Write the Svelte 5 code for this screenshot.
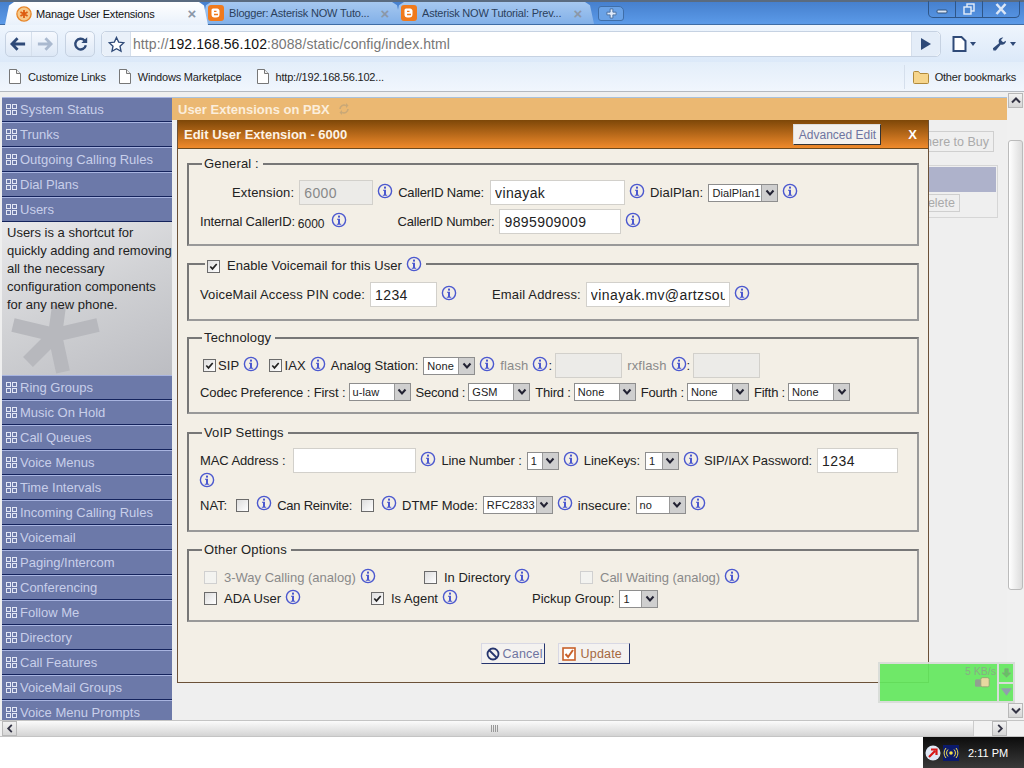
<script>
    const topItems = ['System Status', 'Trunks', 'Outgoing Calling Rules', 'Dial Plans', 'Users'];
    const lowerItems = ['Ring Groups', 'Music On Hold', 'Call Queues', 'Voice Menus', 'Time Intervals', 'Incoming Calling Rules', 'Voicemail', 'Paging/Intercom', 'Conferencing', 'Follow Me', 'Directory', 'Call Features', 'VoiceMail Groups', 'Voice Menu Prompts'];
</script>

{#snippet info()}
    <svg class="info" viewBox="0 0 16 16"><circle cx="8" cy="8" r="6.6" fill="none" stroke="#4b58cf" stroke-width="1.4"/><rect x="7" y="3.6" width="2" height="2" fill="#4b58cf"/><path d="M6 6.8h3v5h1.2v1H5.8v-1H7v-4H6z" fill="#4b58cf"/></svg>
{/snippet}

{#snippet check(on, off)}
    <span class="cb" class:off>
        {#if on}<svg viewBox="0 0 12 12"><path d="M2.5 6l2.4 2.6 4.6-5.4" fill="none" stroke="#222" stroke-width="1.8"/></svg>{/if}
    </span>
{/snippet}

{#snippet sel(text, width)}
    <span class="sel" style="width:{width}px"><span class="seltext">{text}</span><span class="selbtn"><svg viewBox="0 0 10 8"><path d="M1.5 1.5L5 5.5l3.5-4" fill="none" stroke="#223" stroke-width="2"/></svg></span></span>
{/snippet}

{#snippet pageicon()}
    <svg class="pageicon" viewBox="0 0 12 15"><path d="M.5.5h7l4 4v10H.5z" fill="#fff" stroke="#777"/><path d="M7.5.5v4h4" fill="#eee" stroke="#777"/></svg>
{/snippet}

{#snippet blogger()}
    <svg class="favicon" viewBox="0 0 16 16"><rect width="16" height="16" rx="3" fill="#f07a1c"/><path d="M5 3.5h4a2.5 2.5 0 012.5 3V9a3.4 3.4 0 01-3.4 3.5H6.6A3 3 0 013.5 9.500V5A1.500 1.500 0 015 3.500z" fill="#fff"/><path d="M6 6.300h2.500M6 9.500h4" stroke="#f07a1c" stroke-width="1.300"/></svg>
{/snippet}

<div class="screen">
    <header class="tabstrip">
        <div class="tab active">
            <svg class="favicon" viewBox="0 0 18 18"><circle cx="9" cy="9" r="8" fill="#f7c98a" stroke="#e8872a" stroke-width="1.500"/><path d="M9 4.500v9M5 6.700l8 4.600M13 6.700l-8 4.600" stroke="#dd5d10" stroke-width="2"/></svg>
            <span class="tabtitle">Manage User Extensions</span><span class="tabx">×</span>
        </div>
        <div class="tab">
            {@render blogger()}
            <span class="tabtitle">Blogger: Asterisk NOW Tuto...</span><span class="tabx">×</span>
        </div>
        <div class="tab">
            {@render blogger()}
            <span class="tabtitle">Asterisk NOW Tutorial: Prev...</span><span class="tabx">×</span>
        </div>
        <div class="newtab"><svg viewBox="0 0 12 12"><path d="M4.500 1h3v3.500H11v3H7.500V11h-3V7.500H1v-3h3.500z" fill="#dfeafa" stroke="#4a6f9e"/></svg></div>
        <div class="winctl">
            <span><svg viewBox="0 0 14 12"><rect x="2" y="7" width="10" height="3" rx="1" fill="#dbe7f7" stroke="#33527a"/></svg></span>
            <span><svg viewBox="0 0 14 12"><rect x="5" y="1" width="7" height="7" fill="none" stroke="#e6eefa" stroke-width="1.400"/><rect x="2" y="4" width="7" height="7" fill="#4c87d2" stroke="#e6eefa" stroke-width="1.400"/></svg></span>
            <span class="close"><svg viewBox="0 0 14 12"><path d="M2.500 1l9 10M11.500 1l-9 10" stroke="#dbe7f7" stroke-width="2.600"/></svg></span>
        </div>
    </header>

    <nav class="toolbar">
        <div class="navgroup">
            <span class="navbtn"><svg viewBox="0 0 18 16"><path d="M8 2L2 8l6 6M2.500 8H16" fill="none" stroke="#2f4a78" stroke-width="3"/></svg></span>
            <span class="navbtn"><svg viewBox="0 0 18 16"><path d="M10 2l6 6-6 6M15.500 8H2" fill="none" stroke="#aab9cf" stroke-width="3"/></svg></span>
        </div>
        <div class="navgroup reload"><span class="navbtn"><svg viewBox="0 0 18 18"><path d="M13.500 5A6 6 0 1 0 15 10.500" fill="none" stroke="#2f4a78" stroke-width="2.700"/><path d="M16.500 1.500v6.500H10z" fill="#2f4a78"/></svg></span></div>
        <div class="omnibox">
            <span class="star"><svg viewBox="0 0 18 18"><path d="M9 1.500l2.300 5 5.400.6-4 3.700 1.100 5.400L9 13.500l-4.800 2.700 1.100-5.400-4-3.700 5.400-.6z" fill="#fff" stroke="#2f4a78" stroke-width="1.400"/></svg></span>
            <span class="url"><span class="dim">http://</span>192.168.56.102<span class="dim">:8088/static/config/index.html</span></span>
            <span class="go"><svg viewBox="0 0 10 12"><path d="M0 0l10 6-10 6z" fill="#2f4a78"/></svg></span>
        </div>
        <span class="tool doc"><svg viewBox="0 0 14 16"><path d="M1 1h8l4 4v10H1z" fill="#fff" stroke="#2f4a78" stroke-width="2"/></svg><i class="caret"></i></span>
        <span class="tool"><svg viewBox="0 0 16 16"><path d="M15 4.500a4.300 4.300 0 01-5.600 4L4 15H1.500L1 12.500l6.500-5.300A4.300 4.300 0 0112 1L9.500 3.700 11.800 6z" fill="#2f4a78"/></svg><i class="caret"></i></span>
    </nav>

    <div class="bookmarks">
        <span class="mark">{@render pageicon()}Customize Links</span>
        <span class="mark">{@render pageicon()}Windows Marketplace</span>
        <span class="mark">{@render pageicon()}http://192.168.56.102...</span>
        <span class="mark otherbm"><svg class="folder" viewBox="0 0 16 14"><path d="M.5 2.500q0-1 1-1h4l1.500 2h7.500q1 0 1 1v8q0 1-1 1h-13q-1 0-1-1z" fill="#f6d58c" stroke="#b08a3c"/></svg>Other bookmarks</span>
    </div>

    <div class="viewport">
        <div class="page">
            <aside class="sidebar">
                {#each topItems as item}
                    <div class="navitem"><i class="grid"><b></b><b></b><b></b><b></b></i>{item}</div>
                {/each}
                <div class="desc">
                    <svg class="bigstar" viewBox="0 0 170 153"><path d="M53 113L57 84M53 113L11 103M53 113L96 103M53 113L26 140M53 113L61 150" stroke="#b7b8bd" stroke-width="14"/></svg>
                    <p>Users is a shortcut for quickly adding and removing all the necessary configuration components for any new phone.</p>
                </div>
                {#each lowerItems as item}
                    <div class="navitem"><i class="grid"><b></b><b></b><b></b><b></b></i>{item}</div>
                {/each}
            </aside>
            <main class="main">
                <div class="titlebar">User Extensions on PBX <svg class="sync" viewBox="0 0 12 12"><path d="M2 6a4 4 0 016-3.400M10 6a4 4 0 01-6 3.400" fill="none" stroke="#c9a877" stroke-width="1.600"/><path d="M8 0v5l2.500-2.500zM4 12V7L1.500 9.500z" fill="#c9a877"/></svg></div>
                <div class="behind">
                    <div class="buyrow"><span class="ghost buy">Where to Buy</span></div>
                    <div class="usertable">
                        <div class="tablehead"></div>
                        <span class="ghost del">Delete</span>
                    </div>
                </div>
            </main>
            <div class="vscroll">
                <span class="sbtn"><svg viewBox="0 0 10 8"><path d="M1 6l4-4 4 4" fill="none" stroke="#334" stroke-width="2"/></svg></span>
                <span class="vthumb"></span>
                <span class="sbtn"><svg viewBox="0 0 10 8"><path d="M1 2l4 4 4-4" fill="none" stroke="#334" stroke-width="2"/></svg></span>
            </div>

            <section class="modal">
                <div class="modalhead">
                    <span class="modaltitle">Edit User Extension - 6000</span>
                    <span class="advanced">Advanced Edit</span>
                    <span class="closex">X</span>
                </div>

                <fieldset class="general">
                    <legend>General :</legend>
                    <div class="row r1">
                        <label class="extlabel">Extension:</label>
                        <input class="field ext" disabled value="6000" />
                        {@render info()}
                        <label class="narrow">CallerID Name:</label>
                        <input class="field cname" value="vinayak" />
                        {@render info()}
                        <label>DialPlan:</label>
                        {@render sel('DialPlan1', 70)}
                        {@render info()}
                    </div>
                    <div class="row r2">
                        <label class="internal">Internal CallerID:</label>
                        <span class="plain">6000</span>
                        {@render info()}
                        <label class="cnum narrow">CallerID Number:</label>
                        <input class="field cnumber" value="9895909009" />
                        {@render info()}
                    </div>
                </fieldset>

                <fieldset class="voicemail">
                    <legend class="vmlegend">{@render check(true)}<span>Enable Voicemail for this User</span>{@render info()}</legend>
                    <div class="row">
                        <label>VoiceMail Access PIN code:</label>
                        <input class="field pin" value="1234" />
                        {@render info()}
                        <label class="email">Email Address:</label>
                        <input class="field mail" value="vinayak.mv@artzsource.com" />
                        {@render info()}
                    </div>
                </fieldset>

                <fieldset class="tech">
                    <legend>Technology</legend>
                    <div class="row t1">
                        {@render check(true)}<label class="tight">SIP</label>{@render info()}
                        {@render check(true)}<label class="tight">IAX</label>{@render info()}
                        <label class="analog">Analog Station:</label>
                        {@render sel('None', 52)}
                        {@render info()}
                        <label class="grey">flash</label>{@render info()}<label class="colon">:</label>
                        <input class="field flash" disabled />
                        <label class="grey">rxflash</label>{@render info()}<label class="colon">:</label>
                        <input class="field flash" disabled />
                    </div>
                    <div class="row t2">
                        <label>Codec Preference : First :</label>{@render sel('u-law', 62)}
                        <label>Second :</label>{@render sel('GSM', 62)}
                        <label>Third :</label>{@render sel('None', 62)}
                        <label>Fourth :</label>{@render sel('None', 62)}
                        <label>Fifth :</label>{@render sel('None', 62)}
                    </div>
                </fieldset>

                <fieldset class="voip">
                    <legend>VoIP Settings</legend>
                    <div class="row v1">
                        <label>MAC Address :</label>
                        <input class="field mac" />
                        {@render info()}
                        <label>Line Number :</label>
                        {@render sel('1', 32)}
                        {@render info()}
                        <label>LineKeys:</label>
                        {@render sel('1', 34)}
                        {@render info()}
                        <label>SIP/IAX Password:</label>
                        <input class="field pass" value="1234" />
                    </div>
                    <div class="row v2">{@render info()}</div>
                    <div class="row v3">
                        <label>NAT:</label>{@render check(false)}{@render info()}
                        <label class="reinvite">Can Reinvite:</label>{@render check(false)}{@render info()}
                        <label>DTMF Mode:</label>{@render sel('RFC2833', 70)}{@render info()}
                        <label>insecure:</label>{@render sel('no', 50)}{@render info()}
                    </div>
                </fieldset>

                <fieldset class="other">
                    <legend>Other Options</legend>
                    <div class="optrow first">
                        <div class="opt w220">{@render check(false, true)}<label class="grey">3-Way Calling (analog)</label>{@render info()}</div>
                        <div class="opt w156">{@render check(false)}<label>In Directory</label>{@render info()}</div>
                        <div class="opt">{@render check(false, true)}<label class="grey">Call Waiting (analog)</label>{@render info()}</div>
                    </div>
                    <div class="optrow">
                        <div class="opt w167">{@render check(false)}<label>ADA User</label>{@render info()}</div>
                        <div class="opt w161">{@render check(true)}<label>Is Agent</label>{@render info()}</div>
                        <div class="opt pickup"><label>Pickup Group:</label>{@render sel('1', 39)}</div>
                    </div>
                </fieldset>

                <div class="actions">
                    <button class="btn"><svg viewBox="0 0 14 14"><circle cx="7" cy="7" r="5.500" fill="none" stroke="#26356e" stroke-width="1.800"/><path d="M3 3l8 8" stroke="#26356e" stroke-width="1.800"/></svg>Cancel</button>
                    <button class="btn update"><svg viewBox="0 0 14 14"><rect x="1" y="1" width="12" height="12" fill="#fff" stroke="#c8602a" stroke-width="1.600"/><path d="M3.500 7l2.600 3 4.900-7" fill="none" stroke="#c8602a" stroke-width="2"/></svg>Update</button>
                </div>
            </section>

            <div class="speed">
                <div class="speedmain"><span>5 KB/s</span><svg viewBox="0 0 20 18"><rect x="1" y="4" width="8" height="9" rx="2" fill="#8a9a8a"/><rect x="8" y="2" width="10" height="11" rx="2" fill="#e8d79a" stroke="#8a9a6a"/></svg></div>
                <div class="speedside">
                    <span><svg viewBox="0 0 12 12"><path d="M4 1h4v5h3l-5 5-5-5h3z" fill="#58c255" stroke="#7d9a78"/></svg></span>
                    <span><svg viewBox="0 0 12 8"><path d="M0 0h12L6 8z" fill="#8a98a8"/></svg></span>
                </div>
            </div>
        </div>

        <div class="hscroll">
            <span class="sbtn h"><svg viewBox="0 0 8 10"><path d="M6 1L2 5l4 4" fill="none" stroke="#334" stroke-width="2"/></svg></span>
            <span class="hthumb"><i></i></span>
            <span class="sbtn h"><svg viewBox="0 0 8 10"><path d="M2 1l4 4-4 4" fill="none" stroke="#334" stroke-width="2"/></svg></span>
        </div>
    </div>

    <footer class="bottom">
        <div class="tray">
            <svg class="trayicon" viewBox="0 0 16 16"><circle cx="8" cy="8" r="7.500" fill="#dfe8f5"/><path d="M4 12l6-6M6 4.500h5.500V10" fill="none" stroke="#d81818" stroke-width="2.200"/></svg>
            <svg class="trayicon" viewBox="0 0 16 16"><rect width="16" height="16" fill="#0b1a6b"/><circle cx="8" cy="8" r="1.800" fill="#f4e04a"/><path d="M5 4.500a5 5 0 000 7M11 4.500a5 5 0 010 7M3 3a7.500 7.500 0 000 10M13 3a7.500 7.500 0 010 10" fill="none" stroke="#f4e04a"/></svg>
            <span class="clock">2:11 PM</span>
        </div>
    </footer>
</div>

<style>
    :global(body) {
        margin: 0;
        background: #fff;
    }
    .screen {
        width: 1024px;
        height: 768px;
        overflow: hidden;
        display: flex;
        flex-direction: column;
        font-family: "Liberation Sans", Arial, sans-serif;
    }

    /* browser frame */
    .tabstrip {
        height: 25px;
        box-sizing: border-box;
        flex: none;
        display: flex;
        align-items: flex-end;
        padding-left: 5px;
        background: linear-gradient(#4680ce, #5b9ae8);
        border-top: 2px solid #5a6b80;
        border-bottom: 1px solid #3e6ca5;
        position: relative;
    }
    .tab {
        width: 199px;
        height: 22px;
        margin-right: -6px;
        box-sizing: border-box;
        padding: 0 12px 0 6px;
        display: flex;
        align-items: center;
        gap: 5px;
        font-size: 11px;
        letter-spacing: -.2px;
        color: #2b3f5c;
        background: linear-gradient(#a6c8f0, #82b0e8);
        clip-path: polygon(0 100%, 4px 15%, 9px 0, calc(100% - 9px) 0, calc(100% - 4px) 15%, 100% 100%);
    }
    .tab.active {
        width: 203px;
        z-index: 2;
        color: #111;
        background: linear-gradient(#fff, #e9f1fb);
        margin-bottom: -1px;
        height: 23px;
        padding-left: 11px;
        gap: 4px;
    }
    .tabtitle {
        flex: 1;
        min-width: 0;
        white-space: nowrap;
        overflow: hidden;
    }
    .tabx {
        color: #8b97a8;
        font-size: 15px;
        font-weight: bold;
    }
    .favicon {
        width: 16px;
        height: 16px;
        flex: none;
    }
    .newtab {
        margin-left: 10px;
        width: 26px;
        height: 15px;
        margin-bottom: 3px;
        display: flex;
        align-items: center;
        justify-content: center;
        background: #6aa2e6;
        border: 1px solid #3f6ea8;
        border-radius: 3px 5px 3px 3px;
        box-sizing: border-box;
    }
    .newtab svg {
        width: 11px;
        height: 11px;
    }
    .winctl {
        position: absolute;
        top: -1px;
        right: 4px;
        width: 92px;
        height: 17px;
        box-sizing: border-box;
        border: 1px solid #2f5688;
        border-top: none;
        border-radius: 0 0 5px 5px;
        display: flex;
    }
    .winctl span {
        width: 26px;
        display: flex;
        align-items: center;
        justify-content: center;
        border-right: 1px solid #2f5688;
    }
    .winctl .close {
        flex: 1;
        border-right: none;
    }
    .winctl svg {
        width: 14px;
        height: 12px;
    }
    .toolbar {
        height: 37px;
        flex: none;
        box-sizing: border-box;
        padding: 6px 0 5px 5px;
        display: flex;
        align-items: stretch;
        background: linear-gradient(#eef5fd, #dce9f9);
    }
    .navgroup {
        display: flex;
        width: 53px;
        border: 1px solid #c6d2e2;
        border-radius: 5px;
        box-sizing: border-box;
        background: linear-gradient(#f6f9fe, #dde8f6);
    }
    .navgroup.reload {
        width: 30px;
        margin-left: 7px;
    }
    .navbtn {
        flex: 1;
        display: flex;
        align-items: center;
        justify-content: center;
    }
    .navbtn + .navbtn {
        border-left: 1px solid #d5dfec;
    }
    .navbtn svg {
        width: 17px;
        height: 16px;
    }
    .omnibox {
        margin-left: 6px;
        width: 840px;
        box-sizing: border-box;
        display: flex;
        align-items: center;
        background: #fff;
        border: 1px solid #c6d2e2;
        border-radius: 5px;
    }
    .star {
        width: 28px;
        height: 100%;
        display: flex;
        align-items: center;
        justify-content: center;
        background: #e9f0f9;
        border-right: 1px solid #d5dfec;
        border-radius: 5px 0 0 5px;
    }
    .star svg {
        width: 17px;
        height: 17px;
    }
    .url {
        flex: 1;
        margin-left: 2px;
        font-size: 14px;
        letter-spacing: .08px;
        color: #111;
    }
    .dim {
        color: #777;
    }
    .go {
        width: 28px;
        height: 100%;
        display: flex;
        align-items: center;
        justify-content: center;
        background: #e4edf8;
        border-left: 1px solid #d5dfec;
        border-radius: 0 5px 5px 0;
    }
    .go svg {
        width: 10px;
        height: 12px;
    }
    .tool {
        width: 40px;
        display: flex;
        align-items: center;
        justify-content: center;
        gap: 3px;
    }
    .tool.doc {
        margin-left: 3px;
    }
    .tool svg {
        width: 15px;
        height: 16px;
    }
    .caret {
        border: 3.500px solid transparent;
        border-top: 4px solid #2f4a78;
        border-bottom: none;
    }
    .bookmarks {
        height: 30px;
        flex: none;
        box-sizing: border-box;
        padding-left: 9px;
        display: flex;
        align-items: center;
        font-size: 11px;
        color: #222;
        letter-spacing: -.2px;
        background: linear-gradient(#e3eefa, #f1f6fd);
        border-bottom: 1px solid #b4b9c0;
    }
    .mark {
        display: flex;
        align-items: center;
        gap: 7px;
        margin-right: 13px;
    }
    .mark:nth-child(2) {
        margin-right: 15px;
    }
    .otherbm {
        margin: 0 8px 0 auto;
        height: 24px;
        padding-left: 8px;
        gap: 6px;
        border-left: 1px solid #d5dfec;
    }
    .pageicon {
        width: 12px;
        height: 15px;
    }
    .folder {
        width: 16px;
        height: 14px;
    }

    /* page */
    .viewport {
        flex: none;
        display: flex;
        flex-direction: column;
    }
    .page {
        height: 628px;
        flex: none;
        box-sizing: border-box;
        padding-top: 5px;
        display: flex;
        overflow: hidden;
        position: relative;
        background: #efefef;
    }
    .sidebar {
        width: 170px;
        margin-left: 2px;
        flex: none;
        font-size: 13px;
    }
    .navitem {
        height: 25px;
        box-sizing: border-box;
        padding-left: 4px;
        display: flex;
        align-items: center;
        gap: 3px;
        color: #c8cfea;
        background: #6c79a9;
        border-top: 1px solid #a8b4e0;
        border-bottom: 1px solid #14235c;
        white-space: nowrap;
    }
    .grid {
        width: 11px;
        height: 11px;
        display: grid;
        grid-template-columns: 5px 5px;
        gap: 1px;
    }
    .grid b {
        border: 1px solid #e4e8f6;
        box-sizing: border-box;
    }
    .desc {
        height: 153px;
        position: relative;
        overflow: hidden;
        background: linear-gradient(155deg, #e9e9eb, #d0d1d4 50%, #bcbdc2);
    }
    .desc p {
        position: relative;
        margin: 0;
        padding: 2px 0 0 5px;
        color: #222;
        line-height: 18px;
        font-size: 13px;
    }
    .bigstar {
        position: absolute;
        left: 0;
        top: 0;
        width: 170px;
        height: 153px;
    }
    .main {
        flex: 1;
        min-width: 0;
    }
    .titlebar {
        height: 23px;
        box-sizing: border-box;
        padding-left: 6px;
        display: flex;
        align-items: center;
        gap: 8px;
        font-size: 13px;
        font-weight: bold;
        color: #fbeedc;
        background: #ebb872;
        border-top: 1px solid #a9c2dc;
    }
    .sync {
        width: 12px;
        height: 12px;
    }
    .behind {
        padding: 11px 13px 0 0;
        display: flex;
        flex-direction: column;
        align-items: flex-end;
        font-size: 12.500px;
    }
    .ghost {
        box-sizing: border-box;
        display: flex;
        align-items: center;
        justify-content: flex-end;
        padding-right: 4px;
        color: #aaa;
        border: 1px solid #cfcfcf;
        white-space: nowrap;
    }
    .buy {
        width: 82px;
        height: 21px;
    }
    .usertable {
        width: 90px;
        height: 53px;
        margin: 13px -4px 0 0;
        box-sizing: border-box;
        border: 1px solid #d6d6d6;
        padding: 1px;
    }
    .tablehead {
        height: 25px;
        background: #aeb2cb;
    }
    .del {
        width: 50px;
        height: 18px;
        margin: 2px 0 0 0;
    }
    .vscroll {
        width: 17px;
        flex: none;
        margin-top: -5px;
        display: flex;
        flex-direction: column;
        align-items: center;
        background: #f0f0f0;
    }
    .sbtn {
        width: 15px;
        height: 15px;
        flex: none;
        display: flex;
        align-items: center;
        justify-content: center;
        background: linear-gradient(#f2f2f2, #d6d6d6);
        border: 1px solid #b8b8b8;
        box-sizing: border-box;
    }
    .sbtn svg {
        width: 10px;
        height: 9px;
    }
    .sbtn:first-child {
        margin-top: 1px;
    }
    .vscroll .sbtn:last-child {
        margin-bottom: 2px;
    }
    .vthumb {
        width: 15px;
        height: 450px;
        margin: 32px 0 auto;
        box-sizing: border-box;
        border: 1px solid #bbb;
        border-radius: 3px;
        background: linear-gradient(90deg, #fff, #dcdcdc);
    }
    .hscroll {
        height: 17px;
        flex: none;
        display: flex;
        align-items: center;
        padding: 0 17px 0 2px;
        background: #f2f2f2;
        border-top: 1px solid #c4c4c4;
        border-bottom: 1px solid #c4c4c4;
        box-sizing: border-box;
    }
    .hscroll .sbtn {
        margin: 0;
    }
    .hthumb {
        width: 956px;
        height: 15px;
        margin-right: auto;
        display: flex;
        align-items: center;
        justify-content: center;
        background: linear-gradient(#fbfbfb, #d4d4d4);
        border-right: 1px solid #ccc;
    }
    .hthumb i {
        width: 8px;
        height: 7px;
        background: repeating-linear-gradient(90deg, #999 0 1px, transparent 1px 2px);
    }
    .bottom {
        flex: 1;
        display: flex;
        justify-content: flex-end;
    }
    .tray {
        width: 101px;
        box-sizing: border-box;
        padding-left: 2px;
        display: flex;
        align-items: center;
        gap: 2px;
        color: #fff;
        font-size: 11px;
        background: linear-gradient(#0c0c0c, #3a3a3a);
    }
    .trayicon {
        width: 16px;
        height: 16px;
    }
    .clock {
        margin-left: 7px;
    }

    /* modal */
    .modal {
        position: absolute;
        left: 177px;
        top: 28px;
        width: 752px;
        height: 563px;
        box-sizing: border-box;
        padding: 0 9px;
        background: #f3efe6;
        border: 1px solid #6b5138;
        border-top: none;
        font-size: 13px;
        letter-spacing: .15px;
        color: #222;
    }
    .modalhead {
        margin: 0 -9px;
        height: 29px;
        box-sizing: border-box;
        padding: 0 11px 0 6px;
        display: flex;
        align-items: center;
        background: linear-gradient(#7d4708, #f08a2b);
        border-bottom: 1px solid #6b4a20;
    }
    .modaltitle {
        flex: 1;
        font-size: 13px;
        font-weight: bold;
        letter-spacing: 0;
        color: #fdf3e6;
    }
    .advanced {
        margin-right: 27px;
        padding: 0 4px 0 5px;
        height: 21px;
        line-height: 20px;
        font-size: 12px;
        letter-spacing: 0;
        box-sizing: border-box;
        color: #6e74a0;
        background: #f3f1ee;
        border: 1px solid #ddd;
        border-right-color: #333;
        border-bottom-color: #333;
    }
    .closex {
        color: #fff;
        font-weight: bold;
        font-size: 13px;
    }
    fieldset {
        margin: 0 0 10px;
        padding: 0 0 0 11px;
        box-sizing: border-box;
        border-width: 2px;
        border-style: solid;
        border-color: #777 #999 #999 #777;
        min-width: 0;
    }
    legend {
        margin-left: 2px;
        padding: 0 4px 0 2px;
        line-height: 16px;
    }
    .general {
        height: 90px;
        margin-top: 7px;
        margin-bottom: 8px;
    }
    .voicemail {
        height: 67px;
        margin-bottom: 9px;
    }
    .tech {
        height: 84px;
        margin-bottom: 11px;
    }
    .voip {
        height: 107px;
    }
    .other {
        height: 80px;
        margin-bottom: 0;
    }
    .row {
        display: flex;
        align-items: center;
        gap: 5px;
        white-space: nowrap;
    }
    label.grey {
        color: #8a8a8a;
    }
    .narrow {
        letter-spacing: -.22px;
    }
    .info {
        width: 16px;
        height: 16px;
        margin: -4px 0 0 -1px;
        flex: none;
    }
    .cb {
        width: 13px;
        height: 13px;
        box-sizing: border-box;
        flex: none;
        border: 1px solid #6b6b6b;
        background: linear-gradient(135deg, #ddd, #fff);
    }
    .cb.off {
        border-color: #d0d0d0;
        background: #f3f3f0;
    }
    .cb svg {
        display: block;
    }
    .field {
        height: 25px;
        box-sizing: border-box;
        padding: 0 4px;
        border: 1px solid #d2d0cb;
        background: #fff;
        font: 14px "Liberation Sans", Arial, sans-serif;
        letter-spacing: .4px;
        color: #222;
        outline: none;
    }
    .field:disabled {
        background: #ecebe8;
        color: #888;
    }
    .sel {
        height: 18px;
        box-sizing: border-box;
        flex: none;
        display: flex;
        align-items: center;
        background: #fff;
        border: 1px solid #8e8e8e;
        font-size: 11px;
        letter-spacing: .1px;
        overflow: hidden;
    }
    .seltext {
        flex: 1;
        padding-left: 3px;
    }
    .selbtn {
        width: 15px;
        height: 100%;
        display: flex;
        align-items: center;
        justify-content: center;
        background: #cfcfcf;
        border-left: 1px solid #999;
    }
    .selbtn svg {
        width: 10px;
        height: 8px;
    }

    /* general */
    .r1 {
        margin-top: 8px;
    }
    .extlabel {
        margin-left: 32px;
    }
    .ext {
        width: 74px;
    }
    .cname {
        width: 135px;
        margin-left: 1px;
    }
    .r2 {
        margin-top: 4px;
    }
    .internal {
        letter-spacing: -.15px;
    }
    .plain {
        font-size: 12px;
        letter-spacing: 0;
        margin: 4px 2px 0 -2px;
    }
    .cnum {
        margin-left: 46px;
    }
    .cnumber {
        width: 122px;
    }

    /* voicemail */
    .vmlegend {
        display: flex;
        align-items: center;
        gap: 7px;
        margin-left: 5px;
        padding-top: 4px;
        letter-spacing: .05px;
    }
    .vmlegend .info {
        margin-left: -3px;
    }
    .voicemail .row {
        margin-top: 8px;
    }
    .pin {
        width: 67px;
    }
    .email {
        margin-left: 30px;
    }
    .mail {
        width: 144px;
    }

    /* technology */
    .t1 {
        margin: 7px 0 0 -2px;
    }
    .t1 .cb {
        margin-left: 5px;
    }
    .tight {
        margin-left: -3px;
    }
    .analog {
        letter-spacing: -.05px;
    }
    .colon {
        margin: 0 -2px 0 -5px;
    }
    .flash {
        width: 67px;
    }
    .t2 {
        margin-top: 5px;
        gap: 4px;
    }
    .t2 label {
        margin: 0 -1px 0 1px;
        letter-spacing: -.2px;
    }
    .t2 label:first-child {
        margin-left: 0;
        letter-spacing: -.1px;
    }

    /* voip */
    .v1 {
        margin-top: 7px;
    }
    .v1 label {
        letter-spacing: -.1px;
    }
    .mac {
        width: 123px;
        margin-left: 3px;
    }
    .pass {
        width: 81px;
    }
    .v2 {
        margin-top: 3px;
    }
    .v3 {
        margin-top: 8px;
    }
    .v3 label {
        letter-spacing: 0;
    }
    .v3 .reinvite {
        letter-spacing: -.25px;
    }
    .v3 .cb {
        margin-left: 4px;
    }
    .v3 .cb + .info {
        margin-left: 2px;
    }

    /* other */
    .optrow {
        display: flex;
        margin-left: 4px;
    }
    .optrow.first {
        margin-top: 9px;
    }
    .opt {
        display: flex;
        align-items: center;
        gap: 7px;
        height: 21px;
        white-space: nowrap;
    }
    .opt label {
        letter-spacing: 0;
    }
    .opt .info {
        margin-left: -3px;
    }
    .w220 {
        width: 220px;
    }
    .w156 {
        width: 156px;
    }
    .w167 {
        width: 167px;
    }
    .w161 {
        width: 161px;
    }
    .pickup {
        gap: 5px;
    }
    .actions {
        margin-top: 21px;
        display: flex;
        justify-content: center;
        gap: 13px;
        padding-left: 4px;
    }
    .btn {
        width: 64px;
        height: 21px;
        box-sizing: border-box;
        padding: 0 0 0 4px;
        display: flex;
        align-items: center;
        gap: 3px;
        font: 12.500px "Liberation Sans", Arial, sans-serif;
        letter-spacing: .2px;
        color: #6e74a0;
        background: #f4f2f0;
        border: 1px solid #d8d8e4;
        border-right-color: #26356e;
        border-bottom-color: #26356e;
    }
    .btn svg {
        width: 14px;
        height: 14px;
    }
    .btn.update {
        width: 72px;
        color: #a4683f;
        padding-left: 3px;
        gap: 5px;
        border-color: #d8d8e4 #26356e #26356e #d8d8e4;
    }
    .speed {
        position: absolute;
        left: 878px;
        top: 570px;
        width: 137px;
        height: 41px;
        box-sizing: border-box;
        padding: 2px;
        display: flex;
        gap: 2px;
        background: #d8dcd8;
        opacity: .92;
    }
    .speedmain {
        flex: 1;
        position: relative;
        background: #64e85e;
    }
    .speedmain span {
        position: absolute;
        right: 1px;
        top: 1px;
        font-size: 10.500px;
        color: #7fa87c;
    }
    .speedmain svg {
        position: absolute;
        right: 6px;
        top: 12px;
        width: 17px;
        height: 15px;
    }
    .speedside {
        width: 14px;
        display: flex;
        flex-direction: column;
        gap: 2px;
    }
    .speedside span {
        flex: 1;
        display: flex;
        align-items: center;
        justify-content: center;
        background: #64e85e;
    }
    .speedside svg {
        width: 11px;
        height: 10px;
    }
</style>
